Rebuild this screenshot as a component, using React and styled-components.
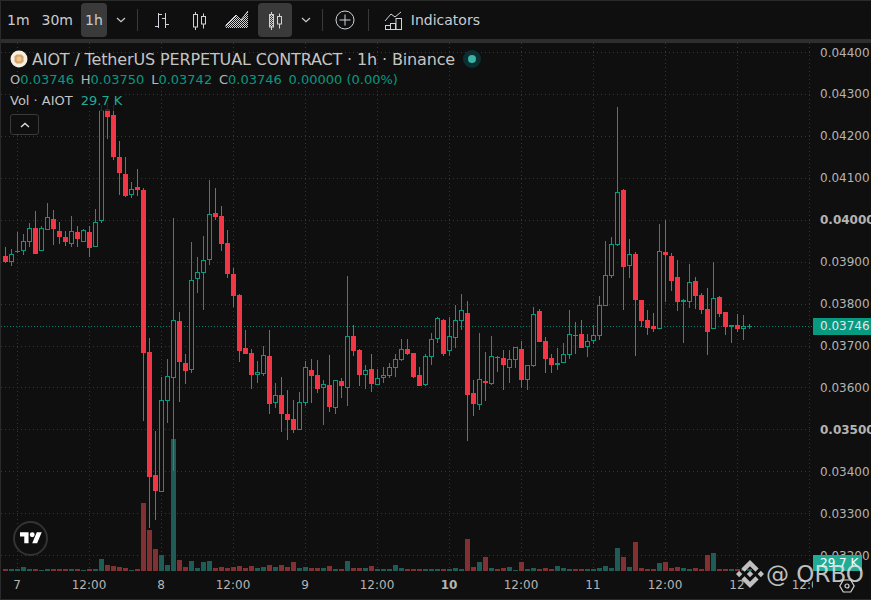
import React from "react"
import styled, { createGlobalStyle } from "styled-components"

const UP = "#089981"
const DOWN = "#f23645"
const BG = "#0f0f0f"
const FONT = `"DejaVu Sans", sans-serif`

// each row: body top, body bottom, wick top, wick bottom, u(p) or d(own) in page pixels
const candles = [
  [256,262,247,263,"d"],[254,262,249,266,"u"],[251,252,232,253,"u"],[241,251,234,255,"u"],[228,242,223,247,"u"],
  [228,254,211,254,"d"],[228,251,226,251,"u"],[217,230,203,230,"u"],[219,229,210,245,"d"],[231,237,222,244,"d"],
  [237,242,231,246,"d"],[231,244,216,247,"u"],[232,239,226,247,"d"],[230,242,229,242,"u"],[232,248,226,257,"d"],
  [222,247,209,247,"u"],[110,221,105,223,"u"],[109,117,103,139,"d"],[115,157,105,160,"d"],[157,173,141,195,"d"],
  [174,196,157,197,"d"],[189,195,182,198,"u"],[187,190,169,196,"d"],[190,353,188,421,"d"],[352,477,338,528,"d"],
  [475,491,431,520,"d"],[400,492,377,492,"u"],[376,401,359,423,"u"],[320,378,218,471,"u"],[321,362,312,402,"d"],
  [363,371,354,384,"d"],[280,370,242,373,"u"],[272,279,257,293,"u"],[260,273,236,310,"u"],[214,260,180,265,"u"],
  [213,217,188,220,"d"],[216,244,206,251,"d"],[243,274,230,278,"d"],[274,296,268,307,"d"],[295,351,294,362,"d"],
  [348,354,330,354,"d"],[353,375,349,389,"d"],[372,375,361,383,"u"],[355,374,346,376,"u"],[356,404,330,414,"d"],
  [395,403,383,408,"u"],[395,414,377,432,"d"],[414,420,390,440,"d"],[419,430,400,433,"d"],[402,430,392,430,"u"],
  [367,403,361,406,"u"],[370,376,359,403,"d"],[375,389,360,393,"d"],[384,388,380,425,"u"],[385,407,355,412,"d"],
  [380,408,380,414,"u"],[381,386,378,398,"d"],[336,388,276,406,"u"],[336,351,325,356,"d"],[350,375,349,386,"d"],
  [370,375,365,389,"u"],[369,384,354,392,"d"],[378,385,369,385,"u"],[375,378,367,383,"u"],[367,376,363,378,"u"],
  [359,368,354,377,"u"],[349,360,339,361,"u"],[349,354,339,355,"d"],[353,377,353,378,"d"],[375,386,367,386,"d"],
  [356,385,354,386,"u"],[339,357,333,365,"u"],[318,339,317,343,"u"],[320,354,319,356,"d"],[336,351,317,356,"u"],
  [320,338,305,348,"u"],[310,321,294,330,"u"],[313,395,301,441,"d"],[393,404,380,416,"d"],[379,405,333,410,"u"],
  [381,383,352,401,"d"],[356,384,336,385,"u"],[357,358,356,372,"d"],[358,365,350,390,"d"],[359,368,350,383,"u"],
  [347,360,347,368,"u"],[349,380,341,388,"d"],[365,380,365,390,"u"],[314,366,307,367,"u"],[311,342,309,342,"d"],
  [341,359,337,373,"d"],[358,365,354,373,"d"],[363,365,348,370,"u"],[354,363,343,363,"u"],[334,355,310,359,"u"],
  [335,336,322,354,"d"],[334,348,320,348,"d"],[341,347,334,357,"u"],[335,341,325,344,"u"],[305,336,296,340,"u"],
  [275,306,241,306,"u"],[244,276,237,278,"u"],[192,245,107,246,"u"],[190,267,189,310,"d"],[254,266,239,278,"u"],
  [254,300,252,356,"d"],[300,321,300,327,"d"],[320,328,310,335,"d"],[326,329,313,332,"d"],[251,329,224,329,"u"],
  [252,255,220,302,"d"],[256,281,253,291,"d"],[277,302,260,311,"d"],[300,302,299,343,"u"],[282,302,264,308,"u"],
  [281,296,277,309,"d"],[295,310,293,314,"d"],[309,332,288,355,"d"],[298,329,262,329,"u"],[297,314,296,317,"d"],
  [312,327,312,335,"d"],[325,327,325,343,"u"],[325,329,314,332,"d"],[326,329,315,340,"u"],[326,327,324,329,"u"],
]

const volumes = [
  2,2,2,4,2,2,1,2,2,2,2,2,2,1,2,2,12,6,5,4,3,1,2,68,41,22,16,6,132,11,4,10,3,9,10,3,4,3,4,5,3,5,3,4,6,4,6,4,9,3,
  4,3,3,3,5,2,2,10,3,3,3,5,2,2,2,6,3,2,2,2,2,2,2,2,2,3,2,32,4,9,14,3,2,3,4,1,9,2,3,2,3,2,5,3,2,2,2,2,2,3,
  5,3,23,14,4,29,3,2,2,8,9,3,4,3,2,3,2,16,18,2,2,2,2,2,2,
]

const priceRows = [52, 94, 136, 178, 220, 262, 304, 346, 387, 429, 471, 513, 555]
const priceLabels = [
  { text: "0.04400" }, { text: "0.04300" }, { text: "0.04200" }, { text: "0.04100" },
  { text: "0.04000", bold: true }, { text: "0.03900" }, { text: "0.03800" }, { text: "0.03700" },
  { text: "0.03600" }, { text: "0.03500", bold: true }, { text: "0.03400" }, { text: "0.03300" }, { text: "0.03200" },
]
const timeLabels = [
  { text: "7" }, { text: "12:00" }, { text: "8" }, { text: "12:00" }, { text: "9" }, { text: "12:00" },
  { text: "10", bold: true }, { text: "12:00" }, { text: "11" }, { text: "12:00" }, { text: "12" }, { text: "12:00" },
]
const gridCols = timeLabels.map((_, i) => 17.5 + 72 * i)

const CandleIcon = ({ hatched }) => (
  <svg width="28" height="28" viewBox="0 0 28 28" fill="none" stroke="#d0d3da">
    <path d="M10.5 6v3M10.5 21v3M18.5 7.5v3M18.5 18v4.5" />
    {hatched && <rect x="9" y="9" width="3" height="12" fill="url(#hatch)" stroke="none" />}
    <rect x="8.5" y="8.5" width="4" height="12.5" />
    <rect x="16.5" y="10.5" width="4" height="7.5" />
  </svg>
)

const App = () => {
  return (
    <Frame>
      <GlobalStyle />
      <Toolbar>
        <TimeButton>1m</TimeButton>
        <TimeButton>30m</TimeButton>
        <TimeButton active>1h</TimeButton>
        <ChevronButton>
          <svg width="10" height="6" viewBox="0 0 10 6" fill="none" stroke="#c8ccd4" strokeWidth="1.2"><path d="M1 1l4 3.6L9 1" /></svg>
        </ChevronButton>
        <Divider />
        <IconButton>
          <svg width="28" height="28" viewBox="0 0 28 28" fill="none" stroke="#d0d3da">
            <path d="M11.5 7v15M8 20.5h3M12 8.5h3M18.5 7v15M15 12.5h3M19 18.5h3" />
          </svg>
        </IconButton>
        <IconButton><CandleIcon /></IconButton>
        <IconButton>
          <svg width="28" height="28" viewBox="0 0 28 28" fill="none" stroke="#d0d3da">
            <defs>
              <pattern id="hatch" width="2" height="2" patternUnits="userSpaceOnUse">
                <rect width="1" height="1" fill="#d0d3da" stroke="none" />
                <rect x="1" y="1" width="1" height="1" fill="#d0d3da" stroke="none" />
              </pattern>
            </defs>
            <path d="M2.5 22V19.5L13 9l5 5 7-9v17z" fill="url(#hatch)" stroke="none" />
            <path d="M2.5 19.5L13 9l5 5 7-9" />
          </svg>
        </IconButton>
        <IconButton active><CandleIcon hatched /></IconButton>
        <ChevronButton>
          <svg width="10" height="6" viewBox="0 0 10 6" fill="none" stroke="#c8ccd4" strokeWidth="1.2"><path d="M1 1l4 3.6L9 1" /></svg>
        </ChevronButton>
        <Divider />
        <IconButton narrow>
          <svg width="22" height="22" viewBox="0 0 22 22" fill="none" stroke="#d0d3da">
            <circle cx="11" cy="11" r="9" />
            <path d="M11 5.5v11M5.5 11h11" />
          </svg>
        </IconButton>
        <Divider />
        <IndicatorsButton>
          <svg width="22" height="22" viewBox="0 0 22 22" fill="none" stroke="#d0d3da">
            <path d="M2 12l6-7 4 3 6-5" />
            <rect x="2.5" y="16.5" width="5" height="4" />
            <rect x="7.5" y="14.5" width="5" height="6" />
            <rect x="13" y="9.5" width="5.5" height="11" />
          </svg>
          Indicators
        </IndicatorsButton>
      </Toolbar>
      <ToolbarRule />
      <ChartRow>
        <Pane>
          <Plot width="812" height="528" viewBox="1 43 812 528">
            {priceRows.map((y) => (
              <GridLine key={y} x1="1" x2="813" y1={y + 0.5} y2={y + 0.5} />
            ))}
            {gridCols.map((x) => (
              <GridLine key={x} x1={x} x2={x} y1="43" y2="571" />
            ))}
            <line x1="1" x2="813" y1="326.5" y2="326.5" stroke={UP} strokeOpacity="0.8" strokeDasharray="1 2" />
            {volumes.map((h, i) => (
              <rect key={i} x={3 + 6 * i} y={571 - h} width="5" height={h} fill={candles[i][4] === "u" ? "#1e5c55" : "#833033"} />
            ))}
            {candles.map(([top, bot, hi, lo, dir], i) => {
              const color = dir === "u" ? UP : DOWN
              const hollow = dir === "u" && bot - top > 2
              return (
                <g key={i}>
                  <rect x={5 + 6 * i} y={hi} width="1" height={lo - hi} fill={color} />
                  {hollow ? (
                    <rect x={3.5 + 6 * i} y={top + 0.5} width="4" height={bot - top - 1} fill={BG} stroke={color} />
                  ) : (
                    <rect x={3 + 6 * i} y={top} width="5" height={bot - top} fill={color} />
                  )}
                </g>
              )
            })}
          </Plot>
          <Legend>
            <TitleRow>
              <svg width="18" height="18" viewBox="0 0 18 18">
                <circle cx="9" cy="9" r="8.5" fill="#f6efe2" />
                <path d="M6.5 4.5h5l2 2v5l-2 2h-5l-2-2v-5z" fill="#d9a468" />
                <circle cx="9" cy="9" r="2.5" fill="#e9c596" />
              </svg>
              <Title>AIOT / TetherUS PERPETUAL CONTRACT · 1h · Binance</Title>
              <StatusDot />
            </TitleRow>
            <LegendRow>
              <Stat><b>O</b><span>0.03746</span></Stat>
              <Stat><b>H</b><span>0.03750</span></Stat>
              <Stat><b>L</b><span>0.03742</span></Stat>
              <Stat><b>C</b><span>0.03746</span></Stat>
              <Stat><span>0.00000 (0.00%)</span></Stat>
            </LegendRow>
            <VolRow>
              Vol · AIOT
              <VolValue>29.7 K</VolValue>
            </VolRow>
            <CollapseButton>
              <svg width="10" height="6" viewBox="0 0 10 6" fill="none" stroke="#e0e0e0" strokeWidth="1.3"><path d="M1 5l4-3.6L9 5" /></svg>
            </CollapseButton>
          </Legend>
          <ChartLogo>
            <svg width="22" height="14" viewBox="0 0 36 22" fill="#fff">
              <path d="M14 18H7V7H0V0h14zM28 18h-8L27.5 0h8z" />
              <circle cx="20" cy="4" r="4" />
            </svg>
          </ChartLogo>
          <TimeAxis>
            {timeLabels.map((t, i) => (
              <TimeTick key={i} bold={t.bold}>{t.text}</TimeTick>
            ))}
          </TimeAxis>
        </Pane>
        <PriceAxis>
          {priceLabels.map((p) => (
            <PriceTick key={p.text} bold={p.bold}>{p.text}</PriceTick>
          ))}
          <LastPrice>0.03746</LastPrice>
          <VolTag>29.7 K</VolTag>
        </PriceAxis>
      </ChartRow>
      <Watermark>
        <svg width="28" height="28" viewBox="0 0 126.61 126.61" fill="currentColor">
          <path d="M38.73 53.2l24.59-24.58 24.6 24.6 14.3-14.31L63.32 0 24.43 38.9l14.3 14.3z" />
          <path d="M0 63.31l14.3-14.31 14.31 14.31-14.31 14.3z" />
          <path d="M38.73 73.41l24.59 24.59 24.6-24.6 14.31 14.29-38.9 38.91-38.91-38.88-.02-.02 14.33-14.29z" />
          <path d="M98 63.31l14.3-14.31 14.31 14.3-14.31 14.32z" />
          <path d="M77.83 63.3L63.32 48.78 52.59 59.51l-1.24 1.23-2.54 2.54 14.51 14.5 14.51-14.47z" />
        </svg>
        <WatermarkText>@ ORBO</WatermarkText>
      </Watermark>
      <SettingsHex>
        <svg width="16" height="14" viewBox="0 0 16 14" fill="none" stroke="#d4d4d4" strokeWidth="1.2">
          <path d="M.8 7l3.5-6h7.4l3.5 6-3.5 6H4.3z" />
          <circle cx="8" cy="7" r="2" />
        </svg>
      </SettingsHex>
    </Frame>
  )
}

export default App

const GlobalStyle = createGlobalStyle`
  html, body {
    margin: 0;
    padding: 0;
    background: ${BG};
  }
  * {
    box-sizing: border-box;
  }
`

const Frame = styled.div`
  position: relative;
  width: 871px;
  height: 600px;
  display: flex;
  flex-direction: column;
  overflow: hidden;
  background: ${BG};
  border-top: 1px solid #2a2a2a;
  border-left: 1px solid #2a2a2a;
  border-bottom: 1px solid #2a2a2a;
  font-family: ${FONT};
`

const Toolbar = styled.div`
  height: 38px;
  display: flex;
  align-items: center;
  gap: 4px;
  padding-left: 2px;
  color: #c8ccd4;
`

const ToolbarRule = styled.div`
  height: 4px;
  background: #2e2e2e;
`

const TimeButton = styled.button`
  height: 34px;
  padding: 0 4px;
  border: none;
  border-radius: 4px;
  background: ${(props) => (props.active ? "#3a3a3a" : "transparent")};
  color: #c8ccd4;
  font-family: inherit;
  font-size: 14px;
`

const ChevronButton = styled.button`
  width: 20px;
  height: 34px;
  padding: 0;
  border: none;
  background: transparent;
  display: flex;
  align-items: center;
  justify-content: center;
`

const IconButton = styled.button`
  width: ${(props) => (props.narrow ? "33px" : "34px")};
  height: 34px;
  padding: 0;
  border: none;
  border-radius: 4px;
  background: ${(props) => (props.active ? "#3a3a3a" : "transparent")};
  display: flex;
  align-items: center;
  justify-content: center;
`

const Divider = styled.div`
  width: 1px;
  height: 22px;
  margin: 0 2px;
  background: #3a3a3a;
`

const IndicatorsButton = styled.button`
  height: 34px;
  padding: 0 0 0 8px;
  border: none;
  background: transparent;
  display: flex;
  align-items: center;
  gap: 6px;
  color: #c8ccd4;
  font-family: inherit;
  font-size: 14px;
`

const ChartRow = styled.div`
  flex: 1;
  display: flex;
  min-height: 0;
`

const Pane = styled.div`
  position: relative;
  width: 812px;
  display: flex;
  flex-direction: column;
`

const Plot = styled.svg`
  display: block;
  flex: none;
`

const GridLine = styled.line`
  stroke: #363636;
  stroke-dasharray: 1 3;
`

const Legend = styled.div`
  position: absolute;
  top: 6px;
  left: 9px;
  display: flex;
  flex-direction: column;
  align-items: flex-start;
`

const TitleRow = styled.div`
  height: 20px;
  display: flex;
  align-items: center;
`

const Title = styled.span`
  margin-left: 4px;
  color: #c4c4c4;
  font-size: 16px;
  letter-spacing: -0.14px;
  white-space: nowrap;
`

const StatusDot = styled.span`
  width: 18px;
  height: 18px;
  margin-left: 8px;
  border-radius: 50%;
  background: #0b2f30;
  display: flex;
  align-items: center;
  justify-content: center;

  &::after {
    content: "";
    width: 8px;
    height: 8px;
    border-radius: 50%;
    background: #3bb3a6;
  }
`

const LegendRow = styled.div`
  height: 21px;
  display: flex;
  align-items: center;
  gap: 6.8px;
  font-size: 13px;
  white-space: nowrap;
`

const Stat = styled.span`
  b {
    font-weight: 400;
    color: #b8b8b8;
  }
  span {
    color: ${UP};
  }
`

const VolRow = styled.div`
  height: 21px;
  padding-right: 2px;
  display: flex;
  align-items: center;
  gap: 8px;
  background: rgba(15, 15, 15, 0.75);
  color: #c4c4c4;
  font-size: 13px;
  white-space: nowrap;
`

const VolValue = styled.span`
  color: #22ab94;
`

const CollapseButton = styled.button`
  width: 29px;
  height: 21px;
  margin-top: 3px;
  padding: 0;
  border: 1px solid #3a3a3a;
  border-radius: 3px;
  background: ${BG};
  display: flex;
  align-items: center;
  justify-content: center;
`

const ChartLogo = styled.div`
  position: absolute;
  left: 12px;
  top: 478px;
  width: 35px;
  height: 35px;
  border: 2px solid #333;
  border-radius: 50%;
  background: ${BG};
  display: flex;
  align-items: center;
  justify-content: center;
`

const TimeAxis = styled.div`
  height: 27px;
  margin-left: -20px;
  display: flex;
  overflow: hidden;
  width: 832px;
  color: #b4b4b4;
  font-size: 12px;
`

const TimeTick = styled.div`
  flex: 0 0 72px;
  display: flex;
  align-items: center;
  justify-content: center;
  font-weight: ${(props) => (props.bold ? 700 : 400)};
`

const PriceAxis = styled.div`
  position: relative;
  flex: 1;
  padding: 1.5px 0 0 7px;
  display: flex;
  flex-direction: column;
  gap: 25.95px;
  overflow: hidden;
`

const PriceTick = styled.div`
  height: 16px;
  line-height: 16px;
  color: #b4b4b4;
  font-size: 12px;
  white-space: nowrap;
  font-weight: ${(props) => (props.bold ? 700 : 400)};
`

const LastPrice = styled.div`
  position: absolute;
  top: 275px;
  left: 0;
  right: 0;
  height: 17px;
  padding-left: 7px;
  background: ${UP};
  color: #e6e6e6;
  font-size: 12px;
  line-height: 17px;
`

const VolTag = styled.div`
  position: absolute;
  top: 512px;
  left: 0;
  width: 49px;
  height: 16px;
  padding-left: 7px;
  background: #22ab94;
  color: #fff;
  font-size: 12px;
  line-height: 16px;
  white-space: nowrap;
`

const Watermark = styled.div`
  position: absolute;
  left: 735px;
  top: 559px;
  display: flex;
  align-items: center;
  gap: 2px;
  color: rgba(232, 232, 232, 0.82);
`

const WatermarkText = styled.span`
  font-size: 23px;
  white-space: nowrap;
`

const SettingsHex = styled.div`
  position: absolute;
  left: 838px;
  top: 578px;
  width: 16px;
  height: 14px;
  display: flex;
`
